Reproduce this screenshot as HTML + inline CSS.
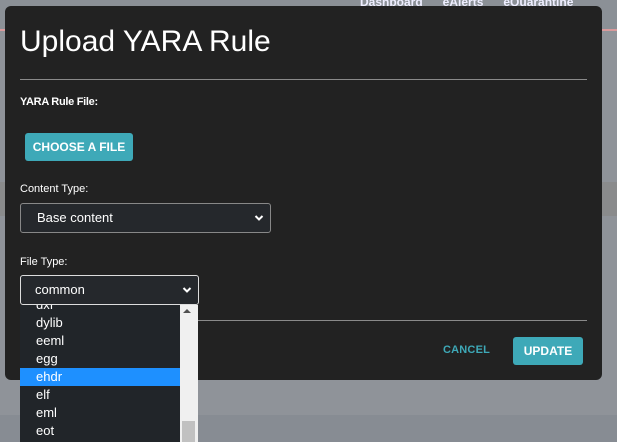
<!DOCTYPE html>
<html><head><style>
*{margin:0;padding:0;box-sizing:border-box}
body{width:617px;height:442px;overflow:hidden;background:#8f9399;font-family:"Liberation Sans",sans-serif;position:relative}
.a{position:absolute}
.lbl{color:#fff;font-size:11px}
.chev{position:absolute;right:6px;top:10px}
</style></head><body>
<div class="a" style="left:0;top:0;width:617px;height:30px;background:#8b9096"></div>
<div class="a" style="left:0;top:29px;width:617px;height:2px;background:#d99a9c"></div>
<div class="a" style="left:0;top:182px;width:617px;height:34px;background:#8a8b8c"></div>
<div class="a" style="left:0;top:415px;width:617px;height:27px;background:#878c93"></div>
<div class="a" style="left:360px;top:-5px;color:#eef;font-size:12px;font-weight:bold">Dashboard &nbsp;&nbsp;&nbsp;&nbsp; eAlerts &nbsp;&nbsp;&nbsp;&nbsp; eQuarantine</div>
<div class="a" style="left:5px;top:6px;width:597px;height:374px;background:#222;border-radius:6px"></div>
<div class="a" style="left:20px;top:25px;color:#fff;font-size:30px">Upload YARA Rule</div>
<div class="a" style="left:20px;top:79px;width:567px;height:1px;background:#8a8a8a"></div>
<div class="a lbl" style="left:20px;top:96px;font-weight:bold;letter-spacing:-0.3px">YARA Rule File:</div>
<div class="a" style="left:25px;top:133px;width:108px;height:28px;background:#3ea9b8;border-radius:3px;color:#fff;font-size:12px;font-weight:bold;text-align:center;line-height:28px">CHOOSE A FILE</div>
<div class="a lbl" style="left:20px;top:183px">Content Type:</div>
<div class="a" style="left:20px;top:203px;width:251px;height:30px;background:#25282c;border:1px solid #888;border-radius:3px;color:#fff;font-size:13px;line-height:28px;padding-left:16px">Base content<svg class="chev" width="10" height="8" viewBox="0 0 10 8"><path d="M1.5 2 L5 5.5 L8.5 2" stroke="#fff" stroke-width="2" fill="none"/></svg></div>
<div class="a lbl" style="left:20px;top:256px">File Type:</div>
<div class="a" style="left:20px;top:275px;width:179px;height:30px;background:#25282c;border:1px solid #ddd;border-radius:3px;color:#fff;font-size:13px;line-height:28px;padding-left:14px">common<svg class="chev" width="10" height="8" viewBox="0 0 10 8"><path d="M1.5 2 L5 5.5 L8.5 2" stroke="#fff" stroke-width="2" fill="none"/></svg></div>
<div class="a" style="left:198px;top:320px;width:389px;height:1px;background:#8a8a8a"></div>
<div class="a" style="left:443px;top:344px;color:#3ea9b8;font-size:11px;font-weight:bold;letter-spacing:0.2px">CANCEL</div>
<div class="a" style="left:513px;top:337px;width:70px;height:28px;background:#3ea9b8;border-radius:3px;color:#fff;font-size:12px;font-weight:bold;text-align:center;line-height:28px">UPDATE</div>
<div class="a" style="left:20px;top:305px;width:178px;height:137px;background:#212529;overflow:hidden;color:#fff;font-size:13px">
<div style="line-height:18px;padding-left:16px;margin-top:-9px">dxf</div>
<div style="line-height:18px;padding-left:16px">dylib</div>
<div style="line-height:18px;padding-left:16px">eeml</div>
<div style="line-height:18px;padding-left:16px">egg</div>
<div style="line-height:18px;padding-left:16px;background:#1e90ff;width:160px">ehdr</div>
<div style="line-height:18px;padding-left:16px">elf</div>
<div style="line-height:18px;padding-left:16px">eml</div>
<div style="line-height:18px;padding-left:16px">eot</div>
<div class="a" style="left:160px;top:0;width:18px;height:137px;background:#f0f0f0"></div>
<div class="a" style="left:163px;top:4px;width:0;height:0;border-left:4px solid transparent;border-right:4px solid transparent;border-bottom:4px solid #505050"></div>
<div class="a" style="left:162px;top:116px;width:13px;height:21px;background:#c1c1c1"></div>
</div>
</body></html>
